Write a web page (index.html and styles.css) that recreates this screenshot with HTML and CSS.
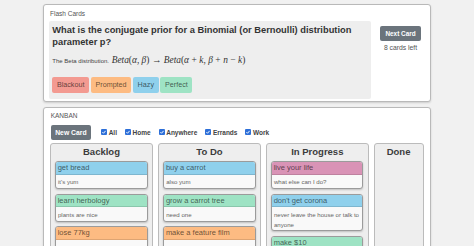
FILE: index.html
```html
<!DOCTYPE html>
<html>
<head>
    <title>Flash Cards &amp; Kanban</title>
    <link rel="stylesheet" href="styles.css">
</head>
<body>
    <div class="page">
        <section class="panel flash">
            <div class="panel-title">Flash Cards</div>
            <div class="flash-row">
                <div class="flash-card">
                    <h1 class="question">What is the conjugate prior for a Binomial (or Bernoulli) distribution parameter p?</h1>
                    <p class="answer">The Beta distribution. <span class="math"><i>Beta</i>(<i>α</i>, <i>β</i>)<span class="op">→</span><i>Beta</i>(<i>α</i><span class="op">+</span><i>k</i>, <i>β</i><span class="op">+</span><i>n</i><span class="op">−</span><i>k</i>)</span></p>
                    <div class="grades">
                        <button class="grade red">Blackout</button>
                        <button class="grade orange">Prompted</button>
                        <button class="grade blue">Hazy</button>
                        <button class="grade green">Perfect</button>
                    </div>
                </div>
                <div class="flash-side">
                    <button class="btn-dark next">Next Card</button>
                    <div class="cards-left">8 cards left</div>
                </div>
            </div>
        </section>

        <section class="panel kanban">
            <div class="panel-title">KANBAN</div>
            <div class="toolbar">
                <button class="btn-dark new">New Card</button>
                <label class="filter"><svg class="check" viewBox="0 0 12 12"><rect width="12" height="12" rx="2" fill="#2d6fd8"/><path d="M2.8 6.3l2.2 2.2 4.2-4.8" stroke="#fff" stroke-width="1.9" fill="none"/></svg>All</label>
                <label class="filter"><svg class="check" viewBox="0 0 12 12"><rect width="12" height="12" rx="2" fill="#2d6fd8"/><path d="M2.8 6.3l2.2 2.2 4.2-4.8" stroke="#fff" stroke-width="1.9" fill="none"/></svg>Home</label>
                <label class="filter"><svg class="check" viewBox="0 0 12 12"><rect width="12" height="12" rx="2" fill="#2d6fd8"/><path d="M2.8 6.3l2.2 2.2 4.2-4.8" stroke="#fff" stroke-width="1.9" fill="none"/></svg>Anywhere</label>
                <label class="filter"><svg class="check" viewBox="0 0 12 12"><rect width="12" height="12" rx="2" fill="#2d6fd8"/><path d="M2.8 6.3l2.2 2.2 4.2-4.8" stroke="#fff" stroke-width="1.9" fill="none"/></svg>Errands</label>
                <label class="filter"><svg class="check" viewBox="0 0 12 12"><rect width="12" height="12" rx="2" fill="#2d6fd8"/><path d="M2.8 6.3l2.2 2.2 4.2-4.8" stroke="#fff" stroke-width="1.9" fill="none"/></svg>Work</label>
            </div>
            <div class="board">
                <div class="column">
                    <h2>Backlog</h2>
                    <div class="card">
                        <div class="card-head blue">get bread</div>
                        <div class="card-body">it's yum</div>
                    </div>
                    <div class="card">
                        <div class="card-head green">learn herbology</div>
                        <div class="card-body">plants are nice</div>
                    </div>
                    <div class="card">
                        <div class="card-head orange">lose 77kg</div>
                        <div class="card-body">i want to weigh a lot</div>
                    </div>
                </div>
                <div class="column">
                    <h2>To Do</h2>
                    <div class="card">
                        <div class="card-head blue">buy a carrot</div>
                        <div class="card-body">also yum</div>
                    </div>
                    <div class="card">
                        <div class="card-head green">grow a carrot tree</div>
                        <div class="card-body">need one</div>
                    </div>
                    <div class="card">
                        <div class="card-head orange">make a feature film</div>
                        <div class="card-body">i've had an idea for ages</div>
                    </div>
                </div>
                <div class="column">
                    <h2>In Progress</h2>
                    <div class="card">
                        <div class="card-head pink">live your life</div>
                        <div class="card-body">what else can I do?</div>
                    </div>
                    <div class="card">
                        <div class="card-head blue">don't get corona</div>
                        <div class="card-body">never leave the house or talk to anyone</div>
                    </div>
                    <div class="card">
                        <div class="card-head green">make $10</div>
                        <div class="card-body">sell some stuff</div>
                    </div>
                </div>
                <div class="column">
                    <h2>Done</h2>
                </div>
            </div>
        </section>
    </div>
</body>
</html>
```

FILE: styles.css
```css
body {
    margin: 0;
    background: #f1f1f1;
    font-family: "Liberation Sans", Arial, sans-serif;
    color: #444;
}

.page {
    width: 388px;
    margin: 4px auto 0;
}

.panel {
    background: #fff;
    border: 1px solid #b9b9b9;
    border-radius: 3px;
    box-shadow: 0 1px 2px rgba(0, 0, 0, 0.15);
}

.panel-title {
    font-size: 6.5px;
    line-height: 9px;
    color: #555;
    padding-left: 1px;
}

/* flash cards */

.flash {
    padding: 4px 0 2px 5px;
}

.flash .panel-title {
    margin-bottom: 2.5px;
}

.flash-row {
    display: flex;
}

.flash-card {
    width: 322px;
    background: #eee;
    border-radius: 2px;
    padding: 3px 3.3px 6px;
    box-sizing: border-box;
}

.question {
    margin: 0 0 7px;
    font-size: 9.3px;
    line-height: 12.3px;
    font-weight: bold;
    color: #333;
}

.answer {
    margin: 0 0 11px;
    font-size: 6px;
    line-height: 10px;
    color: #444;
}

.math {
    font-family: "Liberation Serif", "Times New Roman", serif;
    font-size: 9.4px;
    color: #333;
    margin-left: 1px;
}

.math .op {
    margin: 0 2.5px;
}

.grades {
    display: flex;
    gap: 1.8px;
}

.grade {
    border: 0;
    border-radius: 2px;
    height: 15.6px;
    padding: 0 4.6px;
    font-family: inherit;
    font-size: 7.2px;
    color: rgba(0, 0, 0, 0.62);
}

.red { background: #f39a91; }
.orange { background: #fdbb82; }
.blue { background: #8fd0ec; }
.green { background: #9ee3c4; }
.pink { background: #d993b6; }

.flash-side {
    flex: 1;
    display: flex;
    flex-direction: column;
    align-items: center;
    padding-top: 5.6px;
}

.btn-dark {
    border: 0;
    border-radius: 2px;
    background: #6b747c;
    color: #fff;
    font-family: inherit;
    font-weight: bold;
    height: 15px;
}

.next {
    font-size: 6.4px;
    padding: 0 5px;
}

.cards-left {
    font-size: 6.8px;
    line-height: 9px;
    margin-top: 1.8px;
    color: #555;
}

/* kanban */

.kanban {
    margin-top: 5.7px;
    padding: 3px 5.4px 6px 5.7px;
}

.kanban .panel-title {
    margin-bottom: 4.3px;
}

.toolbar {
    display: flex;
    align-items: center;
    gap: 8px;
    margin-left: 1px;
}

.new {
    font-size: 6.8px;
    padding: 0 4.5px;
    margin-right: 2px;
}

.filter {
    display: flex;
    align-items: center;
    gap: 1.6px;
    font-size: 6.5px;
    font-weight: bold;
    color: #444;
}

.check {
    width: 6px;
    height: 6px;
}

.board {
    display: grid;
    grid-template-columns: 103.6px 103.2px 103.3px 50px;
    gap: 4.6px;
    margin-top: 3.3px;
}

.column {
    background: #eee;
    border: 1px solid #bbb;
    border-radius: 3px;
    padding: 0 4.5px 8px;
    min-height: 110px;
}

.column h2 {
    margin: 0 0 2px;
    padding-top: 1px;
    font-size: 9.5px;
    line-height: 14px;
    text-align: center;
    color: #3c3c3c;
}

.card {
    border: 1px solid #9b9b9b;
    border-radius: 3px;
    overflow: hidden;
    background: #f9f9f9;
    box-shadow: 0 1px 2px rgba(0, 0, 0, 0.2);
    margin-bottom: 4.7px;
}

.card-head {
    font-size: 7.5px;
    line-height: 11.8px;
    padding: 0 1.5px;
    color: rgba(0, 0, 0, 0.6);
    border-bottom: 1px solid rgba(0, 0, 0, 0.12);
}

.card-body {
    font-size: 6.1px;
    line-height: 9.6px;
    padding: 2.6px 1.8px 1px;
    color: #666;
}
```
